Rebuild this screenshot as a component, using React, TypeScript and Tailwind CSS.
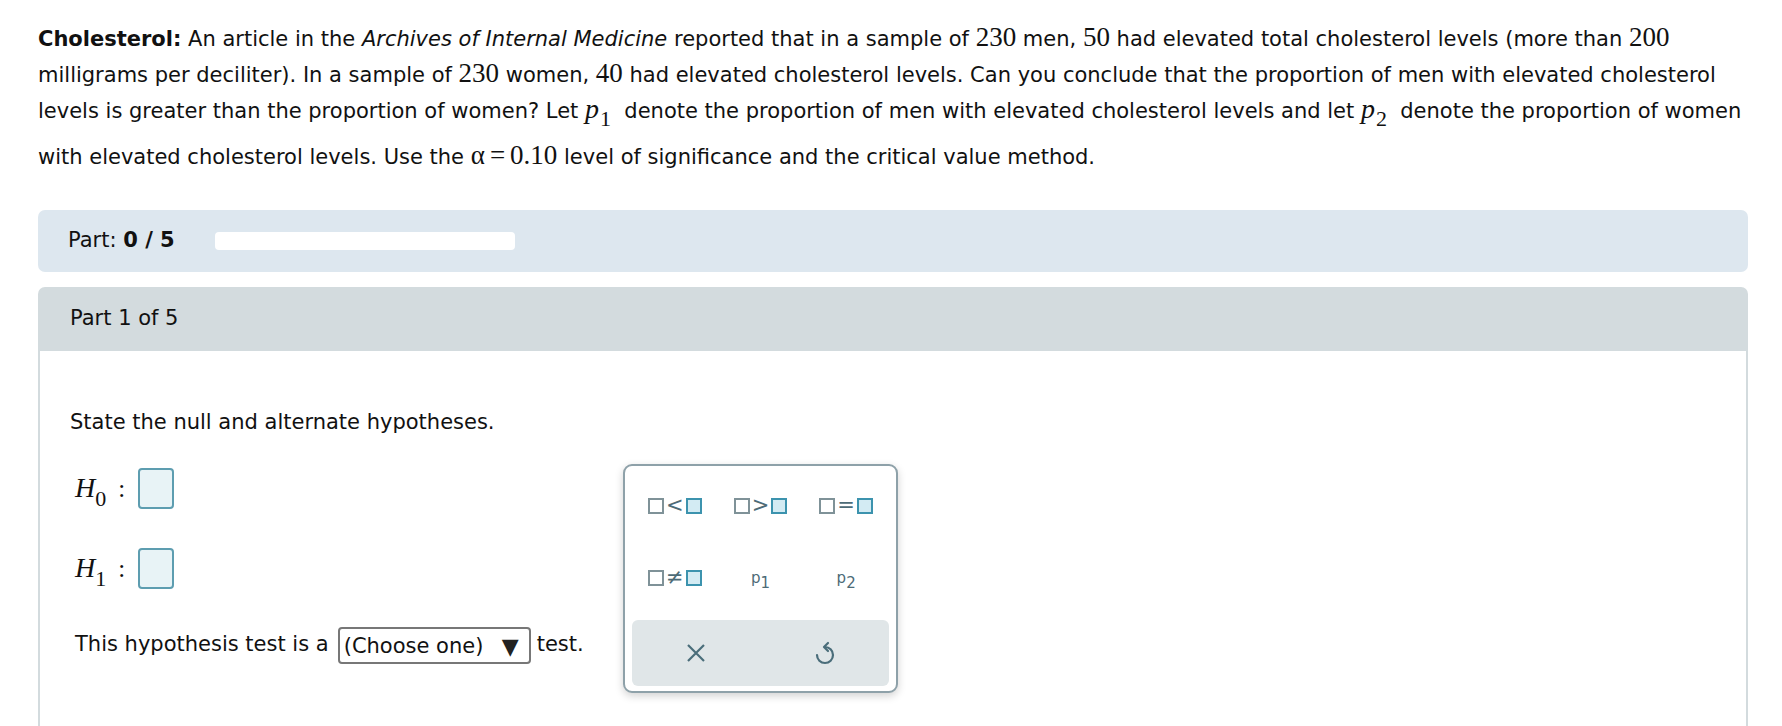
import React from 'react';

const Num = ({ children }: { children: React.ReactNode }) => (
  <span className="font-['Liberation_Serif',serif] text-[27px] leading-none">{children}</span>
);

const PVar = ({ sub }: { sub: string }) => (
  <span className="font-['Liberation_Serif',serif] leading-none">
    <span className="italic text-[28px]">p</span>
    <span className="relative top-[8px] text-[22px] ml-[1px]">{sub}</span>
  </span>
);

const HVar = ({ sub }: { sub: string }) => (
  <span className="font-['Liberation_Serif',serif] text-[#111] leading-none">
    <span className="italic text-[28px]">H</span>
    <span className="relative top-[9px] text-[22px]">{sub}</span>
    <span className="text-[25px] ml-[12px]">:</span>
  </span>
);

const AnswerBox = () => (
  <div className="w-[36px] h-[41px] rounded-[4px] border-2 border-[#5d9db0] bg-[#e8f3f6]" />
);

const Symbol = ({ op }: { op: string }) => (
  <div className="flex items-center gap-[2px]">
    <span className="w-[16px] h-[16px] border-[2.5px] border-[#7f9298]" />
    <span className="text-[21px] leading-none text-[#4d6b77] font-['DejaVu_Sans',sans-serif] -mt-[2px]">{op}</span>
    <span className="w-[16px] h-[16px] border-[2.5px] border-[#3c93ae] bg-[#d3ebf3]" />
  </div>
);

const PaletteVar = ({ sub }: { sub: string }) => (
  <span className="text-[#4d6b77] font-['DejaVu_Sans',sans-serif] text-[15px] leading-none">
    p<span className="relative top-[5px] text-[15px]">{sub}</span>
  </span>
);

const Palette = () => (
  <div className="absolute left-[583px] top-[113px] w-[275px] h-[229px] rounded-[9px] border-2 border-[#8ea1a9] bg-white shadow-[0_3px_8px_rgba(0,0,0,0.18)] px-[7px] pt-[4px] pb-[5px] flex flex-col">
    <div className="grid grid-cols-3">
      <div className="h-[72px] flex items-center justify-center"><Symbol op="<" /></div>
      <div className="h-[72px] flex items-center justify-center"><Symbol op=">" /></div>
      <div className="h-[72px] flex items-center justify-center"><Symbol op="=" /></div>
      <div className="h-[72px] flex items-center justify-center"><Symbol op="≠" /></div>
      <div className="h-[72px] flex items-center justify-center"><PaletteVar sub="1" /></div>
      <div className="h-[72px] flex items-center justify-center"><PaletteVar sub="2" /></div>
    </div>
    <div className="mt-[6px] h-[66px] rounded-[6px] bg-[#e0e6e8] grid grid-cols-2">
      <button className="flex items-center justify-center">
        <svg width="20" height="20" viewBox="0 0 20 20" fill="none" stroke="#4a6d7a" strokeWidth="2.2">
          <path d="M2 2 L18 18 M18 2 L2 18" />
        </svg>
      </button>
      <button className="flex items-center justify-center">
        <svg width="22" height="26" viewBox="0 0 22 26" fill="none" stroke="#4a6d7a" strokeWidth="2.2" strokeLinecap="round" strokeLinejoin="round">
          <path d="M3 15 A8 8 0 1 0 11 7" />
          <path d="M14 3 L10 7 L14 11" />
        </svg>
      </button>
    </div>
  </div>
);

export default function App() {
  return (
    <div className="min-h-[726px] bg-white pl-[38px] pr-[34px] pt-[21px] text-[#111] font-['DejaVu_Sans',Verdana,sans-serif] text-[21px]">
      <div className="leading-[36px]">
        <div>
          <b>Cholesterol:</b> An article in the <i>Archives of Internal Medicine</i> reported that in a sample of <Num>230</Num> men, <Num>50</Num> had elevated total cholesterol levels (more than <Num>200</Num>
        </div>
        <div>
          milligrams per deciliter). In a sample of <Num>230</Num> women, <Num>40</Num> had elevated cholesterol levels. Can you conclude that the proportion of men with elevated cholesterol
        </div>
        <div>
          levels is greater than the proportion of women? Let <PVar sub="1" />&nbsp; denote the proportion of men with elevated cholesterol levels and let <PVar sub="2" />&nbsp; denote the proportion of women
        </div>
        <div className="mt-[10px]">
          with elevated cholesterol levels. Use the <span className="font-['Liberation_Serif',serif] text-[27px] leading-none">α<span className="mx-[5px]">=</span>0.10</span> level of significance and the critical value method.
        </div>
      </div>

      <div className="mt-[35px] h-[62px] rounded-[7px] bg-[#dde7ef] flex items-center pl-[30px]">
        <span>Part: <b>0 / 5</b></span>
        <div className="ml-[40px] w-[300px] h-[18px] rounded-[4px] bg-white" />
      </div>

      <div className="mt-[15px] rounded-t-[7px] overflow-hidden">
        <div className="h-[64px] bg-[#d3dbde] flex items-center pl-[32px]">Part 1 of 5</div>
        <div className="relative h-[380px] border-x-2 border-[#d3dbde] bg-white pl-[30px]">
          <div className="pt-[56px]">State the null and alternate hypotheses.</div>
          <div className="mt-[29px] ml-[5px] flex items-center gap-[13px]">
            <HVar sub="0" />
            <AnswerBox />
          </div>
          <div className="mt-[39px] ml-[5px] flex items-center gap-[13px]">
            <HVar sub="1" />
            <AnswerBox />
          </div>
          <div className="mt-[38px] ml-[5px] flex items-center">
            <span>This hypothesis test is a</span>
            <div className="ml-[9px] w-[193px] h-[37px] rounded-[4px] border-2 border-[#777] flex items-center justify-between pl-[4px] pr-[10px] pt-[4px]">
              <span>(Choose one)</span>
              <span className="text-[22px] leading-none text-[#222]">▼</span>
            </div>
            <span className="ml-[6px]">test.</span>
          </div>
          <Palette />
        </div>
      </div>
    </div>
  );
}
